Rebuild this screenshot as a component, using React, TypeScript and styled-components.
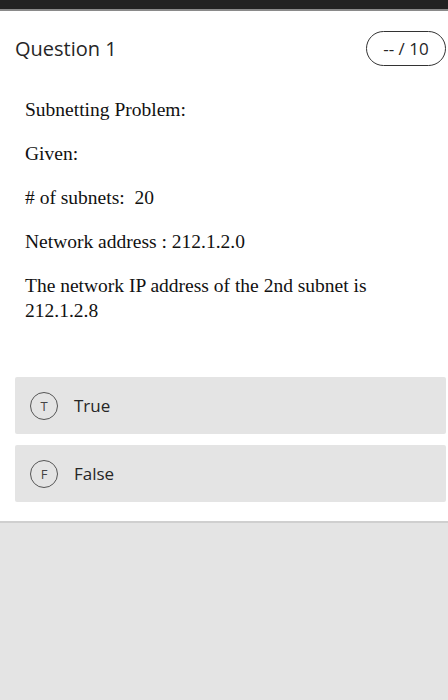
import * as React from 'react';
import styled, { createGlobalStyle } from 'styled-components';

const GlobalStyle = createGlobalStyle`
  html, body {
    margin: 0;
    padding: 0;
    background: #e4e4e4;
  }
  body {
    font-family: "Open Sans", "Liberation Sans", sans-serif;
  }
`;

const TopBar = styled.div`
  height: 9px;
  background: #222222;
  border-bottom: 2px solid #8a8a8a;
`;

const Card = styled.div`
  background: #ffffff;
  padding: 19px 2px 19px 15px;
  border-bottom: 2px solid #cfcfcf;
`;

const Header = styled.div`
  display: flex;
  align-items: center;
  justify-content: space-between;
  height: 36px;
`;

const Title = styled.h2`
  margin: 0;
  font-size: 20px;
  font-weight: 400;
  color: #262626;
`;

const Score = styled.div`
  display: flex;
  align-items: center;
  justify-content: center;
  box-sizing: border-box;
  width: 80px;
  height: 35px;
  border: 1.5px solid #333333;
  border-radius: 18px;
  font-size: 17px;
  color: #262626;
`;

const Prompt = styled.div`
  padding: 31px 0 0 10px;
  font-family: "Liberation Serif", "Times New Roman", serif;
  font-size: 19.5px;
  color: #111111;
`;

const Para = styled.p`
  margin: 0 0 19px;
  line-height: 25px;

  &:last-child {
    margin-bottom: 0;
  }
`;

const Options = styled.div`
  display: flex;
  flex-direction: column;
  gap: 11px;
  margin-top: 54px;
`;

const Option = styled.div`
  display: flex;
  align-items: center;
  gap: 16px;
  height: 57px;
  padding: 0 15px;
  background: #e4e4e4;
  border-radius: 2px;
`;

const Letter = styled.span`
  display: flex;
  align-items: center;
  justify-content: center;
  width: 26px;
  height: 26px;
  border: 1px solid #555555;
  border-radius: 50%;
  font-size: 13px;
  color: #444444;
`;

const Label = styled.span`
  font-size: 17px;
  color: #262626;
`;

const answers = [
  { key: 'T', label: 'True' },
  { key: 'F', label: 'False' },
];

const App = () => (
  <>
    <GlobalStyle />
    <TopBar />
    <Card>
      <Header>
        <Title>Question 1</Title>
        <Score>-- / 10</Score>
      </Header>
      <Prompt>
        <Para>Subnetting Problem:</Para>
        <Para>Given:</Para>
        <Para># of subnets:&nbsp; 20</Para>
        <Para>Network address : 212.1.2.0</Para>
        <Para>
          The network IP address of the 2nd subnet is
          <br />
          212.1.2.8
        </Para>
      </Prompt>
      <Options>
        {answers.map(a => (
          <Option key={a.key}>
            <Letter>{a.key}</Letter>
            <Label>{a.label}</Label>
          </Option>
        ))}
      </Options>
    </Card>
  </>
);

export default App;
